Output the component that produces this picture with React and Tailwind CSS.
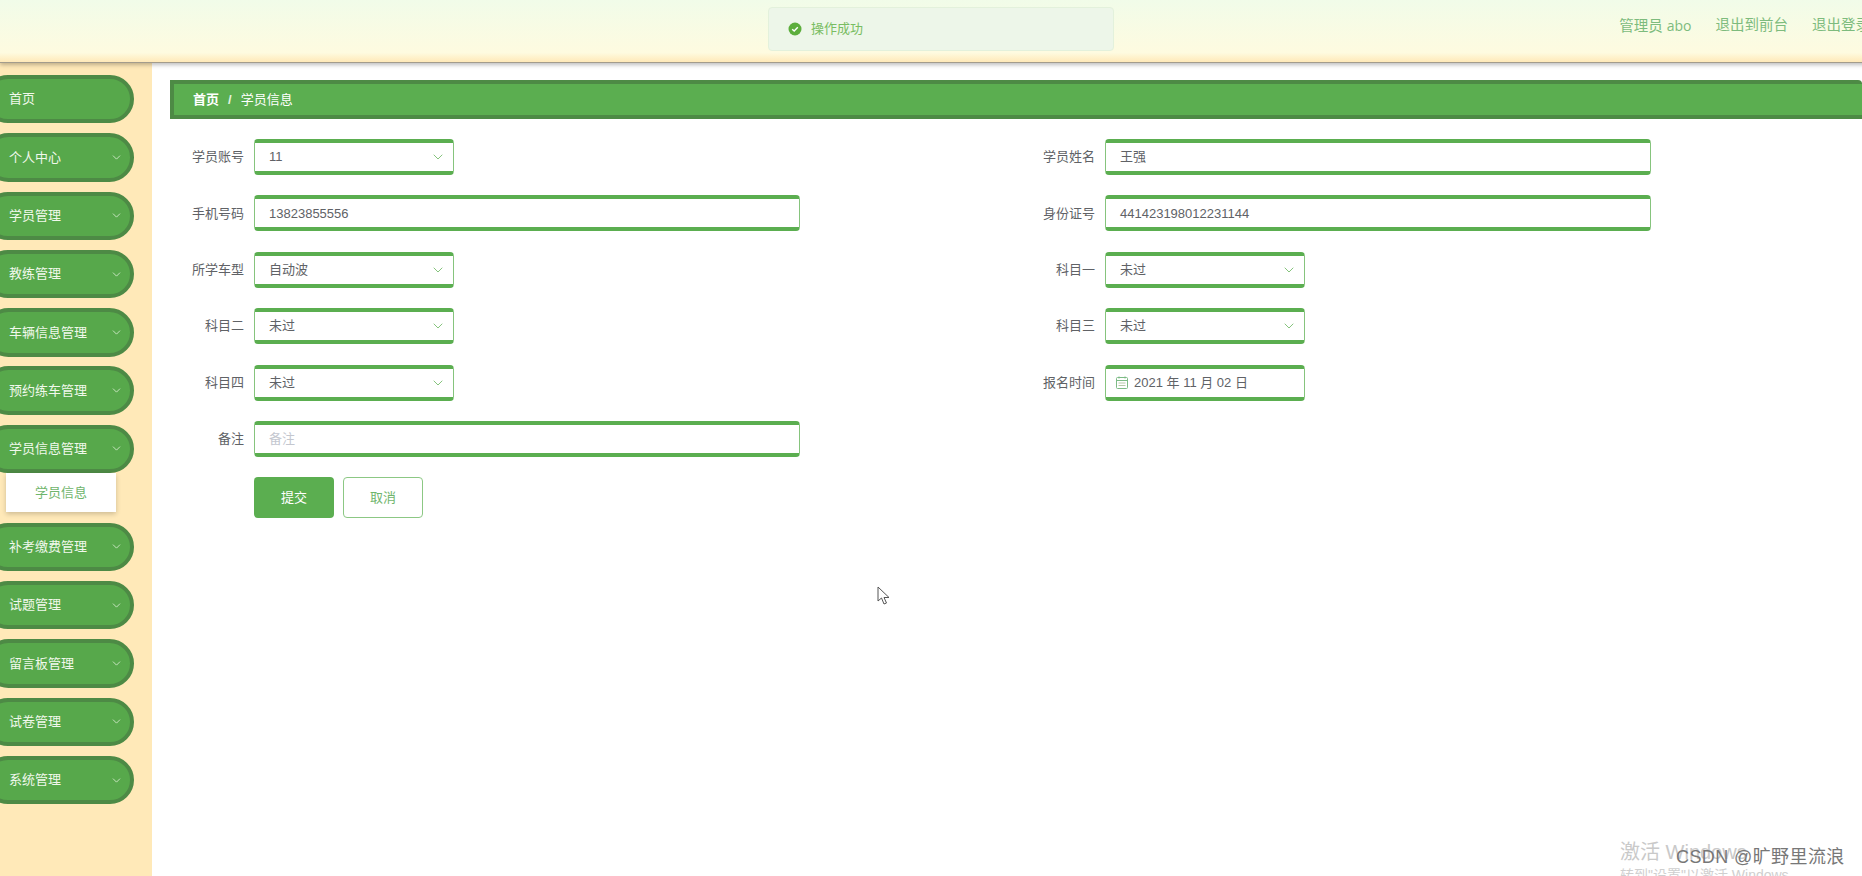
import { ChevronDown } from 'lucide-react';

const font = { fontFamily: '"Liberation Sans", "Noto Sans CJK SC", sans-serif' };

const menus = [
  { name: '首页', arrow: false },
  { name: '个人中心', arrow: true },
  { name: '学员管理', arrow: true },
  { name: '教练管理', arrow: true },
  { name: '车辆信息管理', arrow: true },
  { name: '预约练车管理', arrow: true },
  { name: '学员信息管理', arrow: true, sub: '学员信息' },
  { name: '补考缴费管理', arrow: true },
  { name: '试题管理', arrow: true },
  { name: '留言板管理', arrow: true },
  { name: '试卷管理', arrow: true },
  { name: '系统管理', arrow: true },
];

const boxClass = 'flex items-center h-[36px] bg-white border-x border-x-[#86c47d] border-y-[4px] border-y-[#5bae50] rounded-[4px] text-[13px] text-[#606266]';

function Field({ label, children }) {
  return (
    <div className="flex items-center">
      <label className="w-[74px] mr-[10px] text-right text-[13px] text-[#606266]">{label}</label>
      {children}
    </div>
  );
}

function SelectBox({ value }) {
  return (
    <div className={`${boxClass} w-[200px] pl-[14px] pr-[7px] justify-between`}>
      <span>{value}</span>
      <ChevronDown size={16} strokeWidth={1.5} className="text-[#86c47d]" />
    </div>
  );
}

function InputBox({ value, wide, placeholder }) {
  return (
    <div className={`${boxClass} ${wide ? 'w-[546px]' : 'w-[200px]'} pl-[14px]`}>
      {value ? <span>{value}</span> : <span className="text-[#c4c7cf]">{placeholder}</span>}
    </div>
  );
}

function DateIcon() {
  return (
    <svg width="12" height="13" viewBox="0 0 12 13" fill="none" stroke="#7dbb85" strokeWidth="1">
      <rect x="0.5" y="1.5" width="11" height="11" rx="1" />
      <path d="M0.5 4.5h11M3 0.5v2M9 0.5v2" />
      <path d="M2.5 7h7M2.5 9.5h7" stroke="#b7c9a8" />
    </svg>
  );
}

export default function App() {
  return (
    <div className="relative w-[1862px] h-[876px] overflow-hidden bg-white flex flex-col" style={font}>
      <header className="relative z-10 h-[63px] shrink-0 flex items-center justify-end gap-[24px] whitespace-nowrap -mr-[8px] pb-[10px] text-[14.5px] text-[#7dbb7d] border-b border-b-[#a39c8c] bg-gradient-to-b from-[#f1fce9] via-[#fefbe0] via-85% to-[#ffe9b8] shadow-[0_2px_4px_rgba(0,0,0,0.25)]">
        <span>管理员 <span className="font-['Open_Sans'] text-[14px]">abo</span></span>
        <span>退出到前台</span>
        <span>退出登录</span>
      </header>

      {/* success message floats over the header */}
      <div className="absolute z-20 left-[768px] top-[7px] w-[346px] h-[44px] flex items-center pl-[19px] bg-[#edf6e9] border border-[#e3f1dc] rounded-[4px] text-[13px] text-[#79bd62]">
        <svg width="14" height="14" viewBox="0 0 14 14" className="mr-[9px]">
          <circle cx="7" cy="7" r="6.5" fill="#5cae3c" />
          <path d="M4.2 7.2l2 1.9 3.6-3.8" fill="none" stroke="#fff" strokeWidth="1.4" />
        </svg>
        操作成功
      </div>

      <div className="flex flex-1 min-h-0">
        <aside className="w-[152px] shrink-0 bg-[#ffe9b8] pt-[12px] overflow-hidden">
          {menus.map((m) => (
            <div key={m.name}>
              <div className="w-[150px] -ml-[16px] h-[48.4px] mb-[9.9px] flex items-center justify-between pl-[21px] pr-[7px] rounded-full bg-[#57a84b] border-[4px] border-[#4d8a45] text-[13px] text-[#f1f8ec] whitespace-nowrap">
                <span>{m.name}</span>
                {m.arrow && <ChevronDown size={13} strokeWidth={1.5} className="text-[#dcefd6]" />}
              </div>
              {m.sub && (
                <div className="w-[110px] ml-[6px] h-[39px] -mt-[10px] mb-[10.8px] flex items-center justify-center bg-white shadow-[0_2px_5px_rgba(0,0,0,0.2)] text-[13px] text-[#6fb56c]">
                  {m.sub}
                </div>
              )}
            </div>
          ))}
        </aside>

        <main className="flex-1 min-w-0 pt-[17px] pl-[18px]">
          <div className="h-[39px] flex items-center pl-[19px] gap-[9px] bg-[#5bae50] border-y-[4px] border-l-[4px] border-[#4d8a45] rounded-tr-[4px] text-[13px] text-white">
            <span className="font-bold">首页</span>
            <span className="font-bold text-[#e6f3e1]">/</span>
            <span>学员信息</span>
          </div>

          <div className="grid grid-cols-[851px_1fr] gap-y-[20.4px] mt-[20px]">
            <Field label="学员账号"><SelectBox value="11" /></Field>
            <Field label="学员姓名"><InputBox value="王强" wide /></Field>
            <Field label="手机号码"><InputBox value="13823855556" wide /></Field>
            <Field label="身份证号"><InputBox value="441423198012231144" wide /></Field>
            <Field label="所学车型"><SelectBox value="自动波" /></Field>
            <Field label="科目一"><SelectBox value="未过" /></Field>
            <Field label="科目二"><SelectBox value="未过" /></Field>
            <Field label="科目三"><SelectBox value="未过" /></Field>
            <Field label="科目四"><SelectBox value="未过" /></Field>
            <Field label="报名时间">
              <div className={`${boxClass} w-[200px] pl-[10px] gap-[6px]`}>
                <DateIcon />
                <span>2021 年 11 月 02 日</span>
              </div>
            </Field>
            <div className="col-span-2">
              <Field label="备注"><InputBox placeholder="备注" wide /></Field>
            </div>
            <div className="col-span-2 flex gap-[9px] ml-[84px] -mt-[0.5px]">
              <button className="w-[80px] h-[41px] rounded-[4px] bg-[#5bae50] text-[13px] text-white">提交</button>
              <button className="w-[80px] h-[41px] rounded-[4px] bg-white border border-[#8cc884] text-[13px] text-[#6fb56c]">取消</button>
            </div>
          </div>
        </main>
      </div>

      {/* mouse cursor */}
      <svg className="absolute left-[877px] top-[586px]" width="15" height="20" viewBox="0 0 15 20" fill="#fff" stroke="#555" strokeWidth="1">
        <path d="M1 1v14l3.5-3 2.5 6 2.5-1-2.5-5.5h5z" />
      </svg>

      {/* windows watermark and csdn mark */}
      <div className="absolute left-[1620px] top-[840px] text-[20px] leading-[24px] text-[#c9c9c9] whitespace-nowrap">激活 Windows</div>
      <div className="absolute left-[1620px] top-[866px] text-[14px] leading-[18px] text-[#cfcfcf] whitespace-nowrap">转到"设置"以激活 Windows。</div>
      <div className="absolute left-[1676px] top-[845px] text-[18px] leading-[24px] tracking-[0.4px] text-[#777] whitespace-nowrap">CSDN @旷野里流浪</div>
    </div>
  );
}
